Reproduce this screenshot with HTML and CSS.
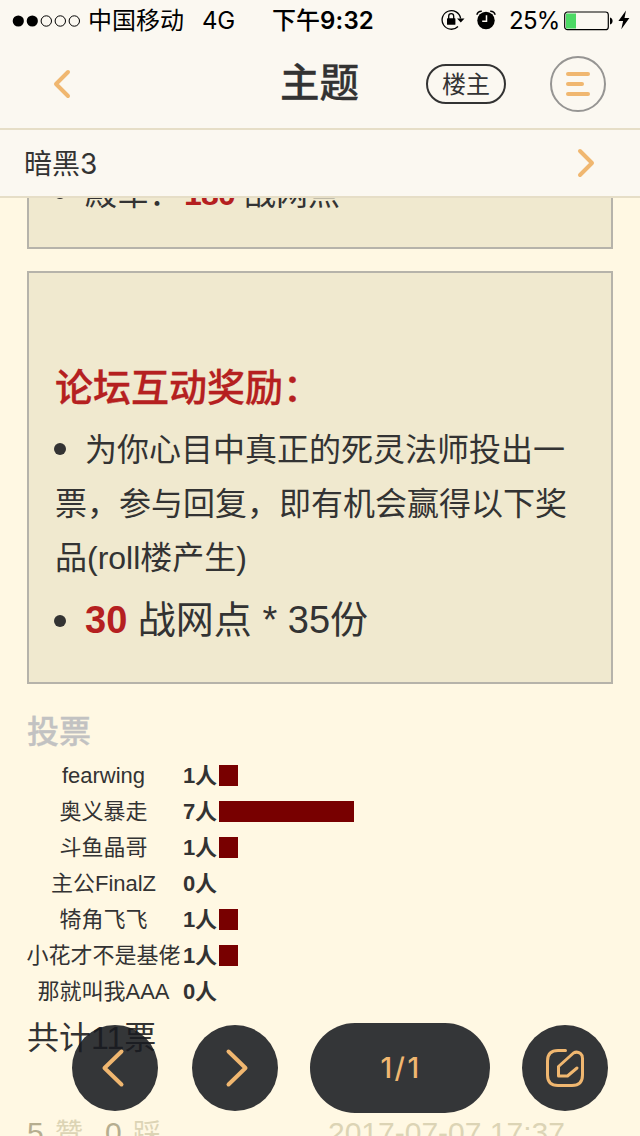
FILE: index.html
```html
<!DOCTYPE html>
<html lang="zh-CN">
<head>
<meta charset="utf-8">
<title>主题</title>
<link rel="stylesheet" href="styles.css">
</head>
<body>
<div class="screen">
  <div class="status">
    <svg class="signal" width="70" height="14" viewBox="0 0 70 14"><circle cx="6.3" cy="7" r="5.6"/><circle cx="20.3" cy="7" r="5.6"/><g fill="none" stroke="#000" stroke-width="1"><circle cx="34.3" cy="7" r="5.2"/><circle cx="48.3" cy="7" r="5.2"/><circle cx="62.3" cy="7" r="5.2"/></g></svg>
    <span class="carrier">中国移动</span>
    <span class="network">4G</span>
    <span class="time">下午<b>9:32</b></span>
    <svg class="lock" width="24" height="22" viewBox="0 0 24 22"><path d="M17 17.500A9.300 9.300 0 1 1 19.600 9.500" fill="none" stroke="#000" stroke-width="1.3"/><path d="M16 9.600h7.500l-3.700 4z"/><rect x="6" y="9.200" width="8.400" height="6.600" rx=".6"/><path d="M7.700 10V7.200a2.500 2.500 0 0 1 5 0V10" fill="none" stroke="#000" stroke-width="1.3"/></svg>
    <svg class="alarm" width="20" height="20" viewBox="0 0 20 20"><circle cx="10" cy="10.500" r="8.700"/><path d="M.8 4.800A5 5 0 0 1 5.800 1.200M14.200 1.200a5 5 0 0 1 5 3.600" fill="none" stroke="#000" stroke-width="1.4"/><path d="M10.500 5.200v6H6.200" fill="none" stroke="#fbf8f1" stroke-width="1.5"/></svg>
    <span class="percent">25%</span>
    <svg class="battery" width="50" height="20" viewBox="0 0 50 20"><rect x=".7" y="1" width="43.600" height="17.700" rx="2.800" fill="none" stroke="#000" stroke-width="1.2"/><rect x="2" y="2.500" width="10" height="15" fill="#4cd964"/><path d="M46 6.500c3.400.6 3.400 6.300 0 7z"/></svg>
    <svg class="bolt" width="12" height="20" viewBox="0 0 12 20"><path d="M8 .5.4 11h4.700L3.300 19.200 11.400 8H6.500z"/></svg>
  </div>
  <header class="header">
    <svg class="back" width="20" height="30" viewBox="0 0 20 30"><path d="M16 3 4 15l12 12"/></svg>
    <h1 class="title">主题</h1>
    <span class="owner">楼主</span>
    <span class="menu"><i></i><i class="short"></i><i></i></span>
  </header>
  <div class="forum">
    <span>暗黑3</span>
    <svg class="forward" width="20" height="30" viewBox="0 0 20 30"><path d="M4 3l12 12L4 27"/></svg>
  </div>
  <main class="content">
    <section class="card previous">
      <p class="item"><i class="dot"></i>殿军：<b>180</b> 战网点</p>
    </section>
    <section class="card reward">
      <h2>论坛互动奖励：</h2>
      <p class="item"><i class="dot"></i>为你心目中真正的死灵法师投出一票，参与回复，即有机会赢得以下奖品(roll楼产生)</p>
      <p class="item large"><i class="dot"></i><b>30</b> 战网点 * 35份</p>
    </section>
    <h3 class="vote-title">投票</h3>
    <div class="votes">
      <div class="row"><span class="name">fearwing</span><b>1人</b><i class="bar one"></i></div>
      <div class="row"><span class="name">奥义暴走</span><b>7人</b><i class="bar seven"></i></div>
      <div class="row"><span class="name">斗鱼晶哥</span><b>1人</b><i class="bar one"></i></div>
      <div class="row"><span class="name">主公FinalZ</span><b>0人</b></div>
      <div class="row"><span class="name">犄角飞飞</span><b>1人</b><i class="bar one"></i></div>
      <div class="row"><span class="name">小花才不是基佬</span><b>1人</b><i class="bar one"></i></div>
      <div class="row"><span class="name">那就叫我AAA</span><b>0人</b></div>
    </div>
    <p class="total">共计11票</p>
    <div class="meta"><span class="num">5</span><span class="act">赞</span><span class="num second">0</span><span class="act">踩</span><time>2017-07-07 17:37</time></div>
  </main>
  <nav class="tools">
    <span class="round"><svg width="40" height="44" viewBox="0 0 40 44"><path d="M26.500 5.500 9.500 22l17 16.500"/></svg></span>
    <span class="round next"><svg width="40" height="44" viewBox="0 0 40 44"><path d="M13.500 5.500l17 16.500-17 16.500"/></svg></span>
    <span class="pages">1/1</span>
    <span class="round"><svg class="edit" width="40" height="40" viewBox="0 0 40 40"><path d="M20.500 2.500H13Q2.500 2.500 2.500 13v14Q2.500 37.500 13 37.500h14Q37.500 37.500 37.500 27V10.500Q37.500 7 35.500 5.500Q32 3 28.500 5L13.500 18.500v9.500h9L32 20"/></svg></span>
  </nav>
</div>
</body>
</html>
```
FILE: styles.css
```css
* { box-sizing: border-box; }
body, h1, h2, h3, p { margin: 0; }
i { font-style: normal; }
svg { display: block; flex: none; }

.screen {
  position: relative;
  display: flex;
  flex-direction: column;
  width: 640px;
  height: 1136px;
  overflow: hidden;
  background: #fff8e3;
  color: #333;
  font-family: "Liberation Sans", "Noto Sans CJK SC", sans-serif;
}

.status {
  display: flex;
  align-items: center;
  flex: none;
  height: 40px;
  padding-left: 12px;
  background: #fbf8f1;
  color: #000;
  font: 24px/38px Inter, "Noto Sans CJK SC", sans-serif;
  white-space: nowrap;
}
.status span { padding-top: 2px; }
.signal { margin-top: 1px; }
.carrier { width: 96px; margin-left: 6px; }
.network { width: 40px; margin-left: 18px; letter-spacing: -0.3px; }
.time { width: 110px; margin-left: 30px; font-weight: 500; }
.time b { font-weight: 600; letter-spacing: 0.2px; }
.lock { margin-left: 59px; }
.alarm { margin-left: 11px; }
.percent { width: 50px; margin-left: 13px; letter-spacing: -0.7px; }
.battery { margin: 1px 0 0 5px; }
.bolt { margin-left: 4px; }

.header {
  display: flex;
  align-items: center;
  flex: none;
  height: 90px;
  padding-left: 52px;
  border-bottom: 2px solid #e6dec7;
  background: #fbf8f1;
}
.back, .forward { fill: none; stroke: #f0b770; stroke-width: 4; stroke-linecap: round; stroke-linejoin: round; }
.title {
  width: 80px;
  margin-left: 208px;
  padding-bottom: 3px;
  font-size: 39.5px;
  line-height: 56px;
  font-weight: 500;
  -webkit-text-stroke: 0.3px currentColor;
}
.owner {
  width: 80px;
  height: 40px;
  margin-left: 66px;
  border: 2px solid #333;
  border-radius: 20px;
  font-size: 24px;
  line-height: 37px;
  text-align: center;
}
.menu {
  display: flex;
  flex-direction: column;
  justify-content: center;
  gap: 6px;
  width: 56px;
  height: 56px;
  margin-left: 44px;
  padding-left: 14px;
  border: 2px solid #969593;
  border-radius: 50%;
}
.menu i { width: 24px; height: 4px; border-radius: 2px; background: #f0b770; }
.menu .short { width: 18px; }

.forum {
  display: flex;
  align-items: center;
  justify-content: space-between;
  flex: none;
  height: 68px;
  padding: 0 44px 0 24px;
  border-bottom: 2px solid #e6dec7;
  background: #fbf8f1;
  font: 28px/64px Inter, "Noto Sans CJK SC", sans-serif;
}
.forum span { padding-top: 2px; }

.content {
  flex: 1;
  min-height: 0;
  overflow: hidden;
  padding: 0 27px;
}
.card {
  padding: 0 26px;
  border: 2px solid #b6b3aa;
  background: #f0e9cf;
}
.card b { color: #b52020; }
.previous { height: 91px; margin-top: -40px; padding-top: 7px; }
.previous b { margin-left: 3px; letter-spacing: -0.8px; }
.reward { height: 413px; margin-top: 22px; padding-top: 86px; }
.reward h2 {
  color: #b52020;
  font-size: 38px;
  line-height: 58px;
  font-weight: 500;
  -webkit-text-stroke: 0.3px currentColor;
}
.item { font-size: 32px; line-height: 54px; }
.reward .item { margin-top: 6px; margin-right: -10px; }
.dot {
  display: inline-block;
  width: 12px;
  height: 12px;
  margin: 0 19px 6px -1px;
  border-radius: 50%;
  background: #333;
}
.reward .large { margin-top: 8px; font-size: 38px; }

.vote-title {
  margin-top: 22px;
  color: #c2c2c2;
  font-size: 32px;
  line-height: 52px;
  font-weight: 500;
  -webkit-text-stroke: 0.3px currentColor;
}
.votes { font-size: 22px; line-height: 36px; }
.row { display: flex; height: 36px; white-space: nowrap; }
.name { flex: none; width: 154px; margin-left: -0.5px; text-align: center; }
.row b { flex: none; width: 36px; margin-left: 2.5px; letter-spacing: -0.3px; }
.bar { height: 21px; margin-top: 7px; background: #780000; }
.one { width: 19px; }
.seven { width: 135px; }
.total { margin-top: 4px; font-size: 32px; line-height: 48px; }
.meta { display: flex; margin-top: 51px; color: #dcd4b5; font-size: 30px; line-height: 40px; }
.num { width: 28px; color: #b6ae90; }
.act { width: 28px; padding-top: 2px; font-size: 28px; }
.second { margin-left: 22px; }
.meta time { margin-left: 167px; white-space: nowrap; }

.tools {
  position: absolute;
  left: 72px;
  top: 1023px;
  display: flex;
  align-items: center;
  width: 536px;
  height: 90px;
}
.round, .pages {
  display: flex;
  align-items: center;
  justify-content: center;
  background: rgba(24, 26, 32, 0.88);
}
.round { width: 86px; height: 86px; border-radius: 50%; }
.round svg { fill: none; stroke: #f0b770; stroke-width: 4; stroke-linecap: round; stroke-linejoin: round; }
.round .edit { stroke-width: 3; }
.next { margin-left: 34px; }
.pages {
  width: 180px;
  height: 90px;
  margin: 0 32px;
  border-radius: 45px;
  color: #f0b770;
  font: 500 28px/40px Inter, sans-serif;
  letter-spacing: 2.5px;
  text-indent: 2px;
}
```
